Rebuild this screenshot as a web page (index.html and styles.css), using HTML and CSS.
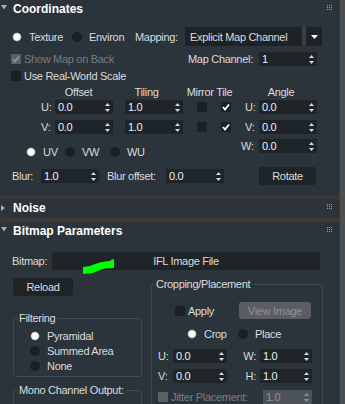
FILE: index.html
```html
<!DOCTYPE html>
<html lang="en">
<head>
    <meta charset="UTF-8">
    <meta name="viewport" content="width=device-width, initial-scale=1.0">
    <title>Bitmap Map Parameters</title>
    <link rel="stylesheet" href="styles.css">
</head>
<body>
<div class="panel">
    <div class="rollouts">

        <!-- Coordinates -->
        <section class="rollout coords">
            <div class="rollout-head">
                <svg class="tri tri-down" width="6" height="5" viewBox="0 0 6 5"><polygon points="0,0 6,0 3,4.5"/></svg>
                <h2>Coordinates</h2>
                <svg class="grip" width="5" height="5" viewBox="0 0 5 5"><rect x="0" y="0" width="1" height="1"/><rect x="2" y="0" width="1" height="1"/><rect x="4" y="0" width="1" height="1"/><rect x="0" y="2" width="1" height="1"/><rect x="2" y="2" width="1" height="1"/><rect x="4" y="2" width="1" height="1"/><rect x="0" y="4" width="1" height="1"/><rect x="2" y="4" width="1" height="1"/><rect x="4" y="4" width="1" height="1"/></svg>
            </div>

            <div class="row row-mapping">
                <label class="radio-item w-texture"><span class="radio on"></span>Texture</label>
                <label class="radio-item w-environ"><span class="radio"></span>Environ</label>
                <span class="lbl w-mapping">Mapping:</span>
                <div class="dropdown">
                    <span class="dd-text">Explicit Map Channel</span>
                    <span class="dd-sep"></span>
                    <span class="dd-btn"><svg width="7" height="4" viewBox="0 0 7 4"><polygon points="0,0 7,0 3.5,4"/></svg></span>
                </div>
            </div>

            <div class="row row-show">
                <label class="check-item w-show disabled"><span class="check dis"><svg viewBox="0 0 8 8"><polyline points="1,4 3,6.5 7,1.5"/></svg></span>Show Map on Back</label>
                <span class="lbl w-mapch">Map Channel:</span>
                <div class="spin w58"><span class="val">1</span><svg class="arrows" viewBox="0 0 5 9"><polygon points="2.5,0 5,3 0,3"/><polygon points="0,6 5,6 2.5,9"/></svg></div>
            </div>

            <div class="row row-rw">
                <label class="check-item"><span class="check"></span>Use Real-World Scale</label>
            </div>

            <div class="row row-heads">
                <span class="head h-offset">Offset</span>
                <span class="head h-tiling">Tiling</span>
                <span class="head h-mirror">Mirror Tile</span>
                <span class="head h-angle">Angle</span>
            </div>

            <div class="row row-uv row-u">
                <span class="axis">U:</span>
                <div class="spin w58"><span class="val">0.0</span><svg class="arrows" viewBox="0 0 5 9"><polygon points="2.5,0 5,3 0,3"/><polygon points="0,6 5,6 2.5,9"/></svg></div>
                <div class="spin w58 gap12"><span class="val">1.0</span><svg class="arrows" viewBox="0 0 5 9"><polygon points="2.5,0 5,3 0,3"/><polygon points="0,6 5,6 2.5,9"/></svg></div>
                <span class="check gap14"></span>
                <span class="check gap14"><svg viewBox="0 0 8 8"><polyline points="1,4 3,6.5 7,1.5"/></svg></span>
                <span class="axis gap14">U:</span>
                <div class="spin w58"><span class="val">0.0</span><svg class="arrows" viewBox="0 0 5 9"><polygon points="2.5,0 5,3 0,3"/><polygon points="0,6 5,6 2.5,9"/></svg></div>
            </div>

            <div class="row row-uv row-v">
                <span class="axis">V:</span>
                <div class="spin w58"><span class="val">0.0</span><svg class="arrows" viewBox="0 0 5 9"><polygon points="2.5,0 5,3 0,3"/><polygon points="0,6 5,6 2.5,9"/></svg></div>
                <div class="spin w58 gap12"><span class="val">1.0</span><svg class="arrows" viewBox="0 0 5 9"><polygon points="2.5,0 5,3 0,3"/><polygon points="0,6 5,6 2.5,9"/></svg></div>
                <span class="check gap14"></span>
                <span class="check gap14"><svg viewBox="0 0 8 8"><polyline points="1,4 3,6.5 7,1.5"/></svg></span>
                <span class="axis gap14">V:</span>
                <div class="spin w58"><span class="val">0.0</span><svg class="arrows" viewBox="0 0 5 9"><polygon points="2.5,0 5,3 0,3"/><polygon points="0,6 5,6 2.5,9"/></svg></div>
            </div>

            <div class="row row-w">
                <div class="plane">
                    <label class="radio-item w-uv"><span class="radio on"></span>UV</label>
                    <label class="radio-item w-vw"><span class="radio"></span>VW</label>
                    <label class="radio-item"><span class="radio"></span>WU</label>
                </div>
                <span class="axis w-wlabel">W:</span>
                <div class="spin w58"><span class="val">0.0</span><svg class="arrows" viewBox="0 0 5 9"><polygon points="2.5,0 5,3 0,3"/><polygon points="0,6 5,6 2.5,9"/></svg></div>
            </div>

            <div class="row row-blur">
                <span class="lbl w-blur">Blur:</span>
                <div class="spin w58"><span class="val">1.0</span><svg class="arrows" viewBox="0 0 5 9"><polygon points="2.5,0 5,3 0,3"/><polygon points="0,6 5,6 2.5,9"/></svg></div>
                <span class="lbl w-bluroff">Blur offset:</span>
                <div class="spin w58"><span class="val">0.0</span><svg class="arrows" viewBox="0 0 5 9"><polygon points="2.5,0 5,3 0,3"/><polygon points="0,6 5,6 2.5,9"/></svg></div>
                <button class="btn rotate">Rotate</button>
            </div>
        </section>

        <!-- Noise -->
        <section class="rollout noise">
            <div class="rollout-head">
                <svg class="tri tri-right" width="6" height="6" viewBox="0 0 6 6"><polygon points="0,0 4,3 0,6"/></svg>
                <h2>Noise</h2>
                <svg class="grip" width="5" height="5" viewBox="0 0 5 5"><rect x="0" y="0" width="1" height="1"/><rect x="2" y="0" width="1" height="1"/><rect x="4" y="0" width="1" height="1"/><rect x="0" y="2" width="1" height="1"/><rect x="2" y="2" width="1" height="1"/><rect x="4" y="2" width="1" height="1"/><rect x="0" y="4" width="1" height="1"/><rect x="2" y="4" width="1" height="1"/><rect x="4" y="4" width="1" height="1"/></svg>
            </div>
        </section>

        <!-- Bitmap Parameters -->
        <section class="rollout bitmap">
            <div class="rollout-head">
                <svg class="tri tri-down" width="6" height="5" viewBox="0 0 6 5"><polygon points="0,0 6,0 3,4.5"/></svg>
                <h2>Bitmap Parameters</h2>
                <svg class="grip" width="5" height="5" viewBox="0 0 5 5"><rect x="0" y="0" width="1" height="1"/><rect x="2" y="0" width="1" height="1"/><rect x="4" y="0" width="1" height="1"/><rect x="0" y="2" width="1" height="1"/><rect x="2" y="2" width="1" height="1"/><rect x="4" y="2" width="1" height="1"/><rect x="0" y="4" width="1" height="1"/><rect x="2" y="4" width="1" height="1"/><rect x="4" y="4" width="1" height="1"/></svg>
            </div>

            <div class="row row-bitmap">
                <span class="lbl w-bitmap">Bitmap:</span>
                <div class="file-field">IFL Image File</div>
                <svg class="scribble" width="33" height="17" viewBox="0 0 33 17"><path d="M1 9 L8 8 L13 6 L18 4.5 L23 3.5 L28 3 L30 1.3 L32 1.3 L32 10 L23 10.5 L18 12 L11 15 L1 16 Z"/></svg>
            </div>

            <div class="bm-lower">
                <div class="bm-left">
                    <button class="btn reload">Reload</button>

                    <fieldset class="group filtering">
                        <legend>Filtering</legend>
                        <div class="radio-list">
                            <label class="radio-item"><span class="radio on"></span>Pyramidal</label>
                            <label class="radio-item"><span class="radio"></span>Summed Area</label>
                            <label class="radio-item"><span class="radio"></span>None</label>
                        </div>
                    </fieldset>

                    <fieldset class="group mono">
                        <legend>Mono Channel Output:</legend>
                        <div class="mono-body"></div>
                    </fieldset>
                </div>

                <div class="bm-right">
                    <fieldset class="group crop">
                        <legend>Cropping/Placement</legend>

                        <div class="row crop-apply">
                            <label class="check-item w-apply"><span class="check"></span>Apply</label>
                            <button class="btn view-image">View Image</button>
                        </div>

                        <div class="row crop-mode">
                            <label class="radio-item w-crop"><span class="radio on"></span>Crop</label>
                            <label class="radio-item"><span class="radio"></span>Place</label>
                        </div>

                        <div class="row crop-uw">
                            <span class="axis w-cu">U:</span>
                            <div class="spin w54"><span class="val">0.0</span><svg class="arrows" viewBox="0 0 5 9"><polygon points="2.5,0 5,3 0,3"/><polygon points="0,6 5,6 2.5,9"/></svg></div>
                            <span class="axis w-cw">W:</span>
                            <div class="spin w52"><span class="val">1.0</span><svg class="arrows" viewBox="0 0 5 9"><polygon points="2.5,0 5,3 0,3"/><polygon points="0,6 5,6 2.5,9"/></svg></div>
                        </div>

                        <div class="row crop-vh">
                            <span class="axis w-cu">V:</span>
                            <div class="spin w54"><span class="val">0.0</span><svg class="arrows" viewBox="0 0 5 9"><polygon points="2.5,0 5,3 0,3"/><polygon points="0,6 5,6 2.5,9"/></svg></div>
                            <span class="axis w-cw">H:</span>
                            <div class="spin w52"><span class="val">1.0</span><svg class="arrows" viewBox="0 0 5 9"><polygon points="2.5,0 5,3 0,3"/><polygon points="0,6 5,6 2.5,9"/></svg></div>
                        </div>

                        <div class="row crop-jitter">
                            <label class="check-item w-jitter disabled"><span class="check dis"></span>Jitter Placement:</label>
                            <div class="spin w49 dis"><span class="val">1.0</span><svg class="arrows" viewBox="0 0 5 9"><polygon points="2.5,0 5,3 0,3"/><polygon points="0,6 5,6 2.5,9"/></svg></div>
                        </div>
                    </fieldset>
                </div>
            </div>
        </section>

    </div>
    <div class="scrollbar"></div>
</div>
</body>
</html>
```

FILE: styles.css
```css
:root {
    --gap-color: #3a3937;
    --rollout-bg: #2b333b;
    --field-bg: #1f2428;
    --text-color: #dcdcdc;
    --dim-text: #787e84;
    --group-line: #414a54;
}

* {
    box-sizing: border-box;
}

body {
    margin: 0;
    width: 345px;
    height: 404px;
    overflow: hidden;
    background-color: var(--gap-color);
    font-family: "Liberation Sans", Arial, sans-serif;
    font-size: 11px;
    line-height: 12px;
    letter-spacing: -0.3px;
    color: var(--text-color);
}

.panel {
    display: flex;
    height: 404px;
}

.rollouts {
    width: 340px;
}

.scrollbar {
    width: 5px;
    background-color: #4e4e4e;
}

.rollout {
    width: 339px;
    background-color: var(--rollout-bg);
    border-radius: 3px;
    margin-bottom: 3px;
}

.rollout-head {
    height: 18px;
    display: flex;
    align-items: flex-start;
}

.rollout-head h2 {
    margin: 0 0 0 6px;
    font-size: 12px;
    line-height: 18px;
    font-weight: bold;
    letter-spacing: 0;
    color: #fff;
}

.tri {
    fill: #a8aeb5;
    margin-left: 1px;
    flex: none;
}

.tri-down {
    margin-top: 5px;
}

.tri-right {
    margin-top: 6px;
}

.grip {
    fill: #98a1ab;
    margin: 5px 7px 0 auto;
}

.noise {
    height: 19px;
    margin-bottom: 4px;
}

/* generic rows */
.row {
    display: flex;
    align-items: center;
}

.lbl, .axis, .head {
    white-space: nowrap;
}

.radio-item, .check-item {
    display: flex;
    align-items: center;
    white-space: nowrap;
}

.radio-item {
    gap: 7px;
}

.check-item {
    gap: 3px;
}

.disabled {
    color: var(--dim-text);
}

.radio {
    width: 10px;
    height: 10px;
    border-radius: 50%;
    background: #1b1f23;
    flex: none;
}

.radio.on {
    background: radial-gradient(circle, #fff 0 3.2px, #a0a0a0 4px, #1b1f23 5px);
}

.check {
    width: 10px;
    height: 10px;
    border-radius: 1px;
    background-color: #1c2024;
    display: flex;
    align-items: center;
    justify-content: center;
    flex: none;
}

.check svg {
    width: 8px;
    height: 8px;
    fill: none;
    stroke: #fff;
    stroke-width: 1.8;
}

.check.dis {
    background-color: #5b6065;
}

.check.dis svg {
    stroke: #8f9499;
}

/* spinner fields */
.spin {
    height: 14px;
    background-color: var(--field-bg);
    display: flex;
    align-items: center;
    padding-left: 3px;
    flex: none;
}

.spin .val {
    flex: 1;
    color: #eef2f8;
}

.spin .arrows {
    width: 5px;
    height: 9px;
    margin-right: 3px;
    fill: #d6d9dc;
}

.spin.dis {
    background-color: #4d5257;
}

.spin.dis .val {
    color: #8f9396;
}

.spin.dis .arrows {
    fill: #8f9396;
}

.w58 { width: 58px; }
.w54 { width: 54px; }
.w52 { width: 52px; }
.w49 { width: 49px; }
.gap12 { margin-left: 12px; }
.gap14 { margin-left: 14px; }

.btn {
    border: none;
    padding: 0;
    font: inherit;
    letter-spacing: inherit;
    color: var(--text-color);
    background-color: var(--field-bg);
    border-radius: 3px;
    text-align: center;
}

/* coordinates rollout */
.coords {
    height: 196px;
}

.row-mapping {
    margin-top: 9px;
    height: 19px;
    padding-left: 12px;
}

.w-texture { width: 60px; }
.w-environ { width: 63px; }
.w-mapping { width: 50px; }

.dropdown {
    width: 137px;
    height: 19px;
    background-color: #1e2226;
    display: flex;
    align-items: center;
}

.dd-text {
    flex: 1;
    padding-left: 5px;
    white-space: nowrap;
}

.dd-sep {
    width: 4px;
    height: 19px;
    background-color: #3a3f45;
}

.dd-btn {
    width: 16px;
    display: flex;
    justify-content: center;
    fill: #fff;
}

.row-show {
    margin-top: 6px;
    height: 14px;
    padding-left: 11px;
}

.w-show { width: 177px; }
.w-mapch { width: 71px; }

.row-rw {
    margin-top: 4px;
    height: 12px;
    padding-left: 11px;
}

.row-heads {
    margin-top: 4px;
    height: 12px;
    padding-left: 40px;
}

.head { text-align: center; }
.h-offset { width: 77px; }
.h-tiling { width: 59px; }
.h-mirror { width: 67px; }
.h-angle { width: 76px; }

.row-uv {
    height: 14px;
    padding-left: 41px;
}

.row-u { margin-top: 2px; }
.row-v { margin-top: 6px; }

.axis { width: 14px; }

.row-w {
    margin-top: 5px;
    align-items: flex-start;
    padding-left: 26px;
}

.plane {
    display: flex;
    width: 215px;
    margin-top: 7px;
}

.w-uv { width: 39px; }
.w-vw { width: 45px; }
.w-wlabel { width: 18px; line-height: 14px; }

.row-blur {
    margin-top: 9px;
    height: 18px;
    padding-left: 12px;
}

.w-blur { width: 29px; }
.w-bluroff { width: 59px; margin-left: 8px; }

.rotate {
    width: 57px;
    height: 18px;
    margin-left: 35px;
}

/* bitmap rollout */
.bitmap {
    height: 200px;
}

.row-bitmap {
    position: relative;
    margin-top: 12px;
    height: 18px;
    padding-left: 12px;
}

.w-bitmap { width: 40px; }

.file-field {
    width: 268px;
    height: 18px;
    line-height: 18px;
    text-align: center;
    background-color: var(--field-bg);
    border-radius: 2px;
}

.scribble {
    position: absolute;
    left: 82px;
    top: 6px;
    fill: #00ff00;
}

.bm-lower {
    display: flex;
    align-items: flex-start;
    margin-top: 8px;
}

.bm-left {
    width: 129px;
    margin-left: 13px;
}

.bm-right {
    width: 172px;
    margin-left: 9px;
}

.reload {
    display: block;
    width: 60px;
    height: 18px;
}

.group {
    margin: 0;
    padding: 0;
    border: 1px solid var(--group-line);
    border-radius: 3px;
    min-width: 0;
}

.group legend {
    padding: 0 2px;
    margin-left: 3px;
    line-height: 12px;
}

.filtering {
    margin-top: 16px;
}

.radio-list {
    padding: 4px 0 3px 16px;
}

.radio-list .radio-item {
    height: 15px;
}

.mono {
    margin-top: 7px;
}

.mono-body {
    height: 40px;
}

.crop {
    margin-left: 0;
    margin-right: 0;
    min-height: 150px;
}

.crop .group legend, .crop legend {
    margin-left: 2px;
}

.crop-apply {
    margin-top: 12px;
    height: 17px;
    padding-left: 23px;
}

.w-apply { width: 64px; }

.view-image {
    width: 72px;
    height: 17px;
    background-color: #5a5e63;
    color: #8f9396;
}

.crop-mode {
    margin-top: 8px;
    height: 14px;
    padding-left: 35px;
}

.w-crop { width: 51px; }

.crop-uw {
    margin-top: 8px;
    height: 14px;
    padding-left: 6px;
}

.crop-vh {
    margin-top: 6px;
    height: 14px;
    padding-left: 6px;
}

.w-cu { width: 15px; }
.w-cw { width: 33px; text-align: right; padding-right: 4px; }

.crop-jitter {
    margin-top: 7px;
    height: 14px;
    padding-left: 6px;
}

.w-jitter { width: 105px; }
```
